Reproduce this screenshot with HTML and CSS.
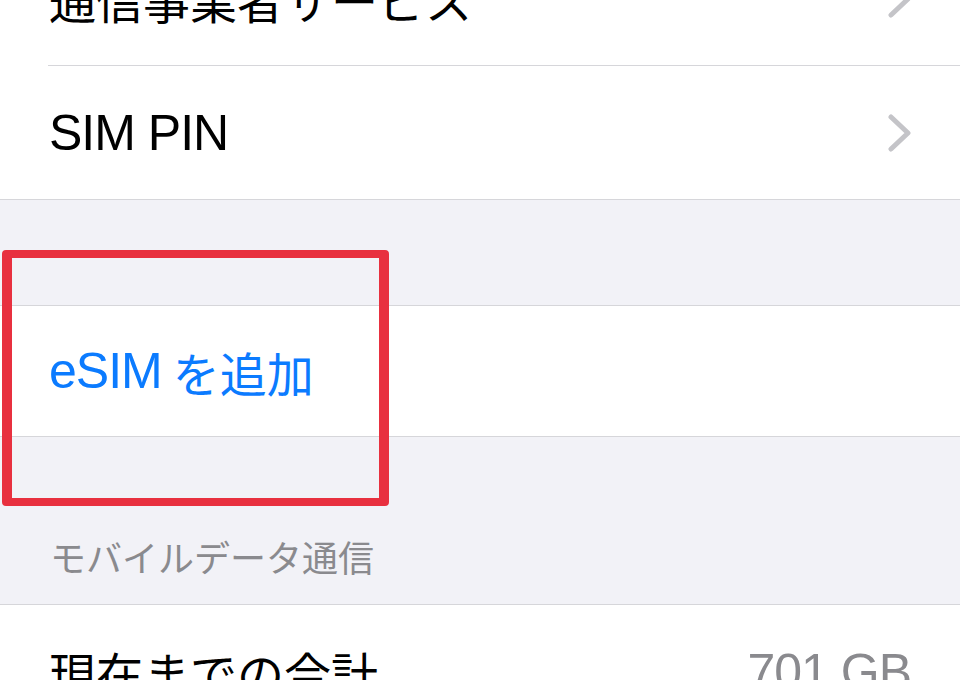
FILE: index.html
```html
<!DOCTYPE html>
<html lang="ja">
<head>
<meta charset="utf-8">
<title>モバイル通信</title>
<link rel="stylesheet" href="styles.css">
</head>
<body>
<div class="page">
  <div class="group group-top">
    <div class="row">
      <span class="label ja">通信事業者サービス</span>
      <svg class="chev" viewBox="0 0 24 38" width="24" height="38"><path d="M3 3 L20 19 L3 35" fill="none" stroke="#c4c4c8" stroke-width="5" stroke-linecap="round" stroke-linejoin="round"/></svg>
    </div>
    <div class="row">
      <span class="label">SIM PIN</span>
      <svg class="chev" viewBox="0 0 24 38" width="24" height="38"><path d="M3 3 L20 19 L3 35" fill="none" stroke="#c4c4c8" stroke-width="5" stroke-linecap="round" stroke-linejoin="round"/></svg>
    </div>
  </div>

  <div class="spacer"></div>

  <div class="group">
    <div class="row">
      <span class="label link">eSIM<span class="gap"></span><span class="ja">を追加</span></span>
    </div>
  </div>

  <div class="section-header">
    <span class="ja">モバイルデータ通信</span>
  </div>

  <div class="group">
    <div class="row">
      <span class="label ja">現在までの合計</span>
      <span class="value">701 GB</span>
    </div>
  </div>

  <div class="highlight"></div>
</div>
</body>
</html>
```

FILE: styles.css
```css
html, body {
  margin: 0;
  padding: 0;
  background: #f2f2f7;
}

body {
  font-family: "Liberation Sans", "Noto Sans CJK JP", sans-serif;
  color: #000;
  overflow: hidden;
  height: 680px;
}

.page {
  position: relative;
  margin-top: -68px;
}

.group {
  background: #fff;
  border-top: 1px solid #d6d6da;
  border-bottom: 1px solid #d6d6da;
}

.group-top {
  border-top: none;
}

.row {
  display: flex;
  align-items: center;
  justify-content: space-between;
  height: 133px;
  margin-left: 48px;
  padding-right: 49px;
  font-size: 50px;
  letter-spacing: -1px;
}

.row + .row {
  border-top: 1px solid #d6d6da;
}

.label {
  padding-left: 1px;
  display: flex;
  align-items: center;
}

.ja {
  font-size: 47px;
  letter-spacing: 0;
}

.gap {
  display: inline-block;
  width: 11px;
}

.link {
  color: #0b7bff;
}

.chev {
  display: block;
  margin-right: -1px;
}

.value {
  color: #8a8a8e;
}

.spacer {
  height: 105px;
}

.group + .spacer + .group .row {
  height: 130px;
}

.section-header {
  height: 167px;
  display: flex;
  align-items: flex-end;
  padding-left: 50px;
  padding-bottom: 23px;
  box-sizing: border-box;
  color: #8a8a8e;
}

.section-header .ja {
  font-size: 36px;
  line-height: 1.2;
}

.highlight {
  position: absolute;
  left: 2px;
  top: 318px;
  width: 387px;
  height: 256px;
  box-sizing: border-box;
  border: solid #e8303f;
  border-width: 8px 10px;
  border-radius: 4px;
}
```
